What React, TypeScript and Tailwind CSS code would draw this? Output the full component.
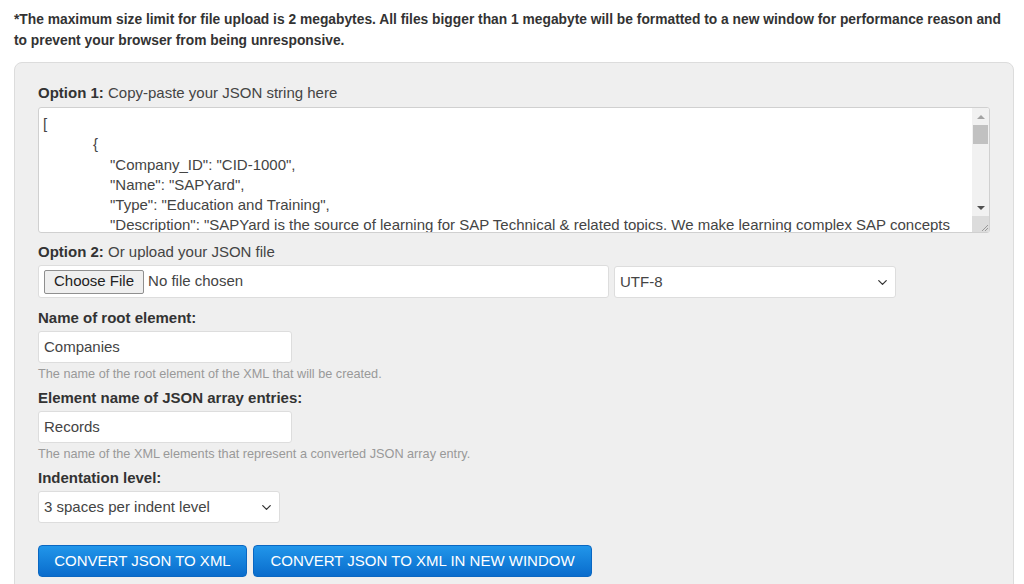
import { ChevronDown } from "lucide-react";

const jsonLines: { indent: number; text: string }[] = [
  { indent: 0, text: "[" },
  { indent: 50, text: "{" },
  { indent: 67, text: '"Company_ID": "CID-1000",' },
  { indent: 67, text: '"Name": "SAPYard",' },
  { indent: 67, text: '"Type": "Education and Training",' },
  {
    indent: 67,
    text: '"Description": "SAPYard is the source of learning for SAP Technical & related topics. We make learning complex SAP concepts',
  },
];

function FieldLabel({ children }: { children: React.ReactNode }) {
  return <div className="text-[15px] leading-[18px] font-bold text-[#333]">{children}</div>;
}

function HelpText({ children }: { children: React.ReactNode }) {
  return <div className="text-[12.7px] leading-[14px] text-[#999] mt-[4px]">{children}</div>;
}

function TextInput({ value }: { value: string }) {
  return (
    <div className="w-[254px] h-[32px] bg-white border border-[#ddd] rounded-[3px] flex items-center px-[5px] text-[15px] text-[#444]">
      {value}
    </div>
  );
}

function FakeSelect({ value, width }: { value: string; width: string }) {
  return (
    <div
      className={`${width} h-[32px] bg-white border border-[#ddd] rounded-[3px] flex items-center justify-between pl-[5px] pr-[5px] text-[15px] text-[#444]`}
    >
      <span>{value}</span>
      <ChevronDown size={15} strokeWidth={2} className="text-[#333]" />
    </div>
  );
}

export default function App() {
  return (
    <div
      className="w-[1024px] h-[584px] overflow-hidden bg-white px-[14px] pt-[9px]"
      style={{ fontFamily: '"Liberation Sans", Arial, sans-serif' }}
    >
      <p className="text-[13.8px] leading-[21px] font-bold text-[#333]">
        *The maximum size limit for file upload is 2 megabytes. All files bigger than 1 megabyte will be formatted to a new window for performance reason and to prevent your browser from being unresponsive.
      </p>

      <div className="mt-[11px] w-[1000px] h-[560px] bg-[#efefef] border border-[#dcdcdc] rounded-[8px] px-[23px] pt-[21px]">
        {/* Option 1 */}
        <div className="text-[15px] leading-[18px] text-[#444]">
          <span className="font-bold text-[#333]">Option 1:</span> Copy-paste your JSON string here
        </div>
        <div className="mt-[5px] w-[952px] h-[126px] bg-white border border-[#d0d0d0] rounded-[3px] flex overflow-hidden">
          <div className="flex-1 overflow-hidden pl-[4px] pt-[6px] text-[15px] leading-[20.3px] text-[#444] whitespace-pre">
            {jsonLines.map((line, i) => (
              <div key={i} style={{ paddingLeft: line.indent }}>
                {line.text}
              </div>
            ))}
          </div>
          <div className="w-[17px] bg-[#f1f1f1] flex flex-col items-center">
            <div className="h-[17px] flex items-center justify-center">
              <div className="w-0 h-0 border-l-[4px] border-r-[4px] border-b-[4px] border-l-transparent border-r-transparent border-b-[#a3a3a3]" />
            </div>
            <div className="w-[15px] h-[19px] bg-[#c1c1c1]" />
            <div className="flex-1" />
            <div className="h-[17px] flex items-center justify-center">
              <div className="w-0 h-0 border-l-[4px] border-r-[4px] border-t-[4px] border-l-transparent border-r-transparent border-t-[#505050]" />
            </div>
            <div className="w-[17px] h-[16px] bg-[#dcdcdc] flex items-end justify-end">
              <svg width="9" height="9" viewBox="0 0 9 9">
                <path d="M8 2 L2 8 M8 5 L5 8" stroke="#999" strokeWidth="1" />
              </svg>
            </div>
          </div>
        </div>

        {/* Option 2 */}
        <div className="mt-[10px] text-[15px] leading-[18px] text-[#444]">
          <span className="font-bold text-[#333]">Option 2:</span> Or upload your JSON file
        </div>
        <div className="mt-[4px] flex gap-[5px]">
          <div className="w-[571px] h-[33px] bg-white border border-[#ddd] rounded-[3px] flex items-center pl-[5px] text-[15px] text-[#444]">
            <div className="h-[24px] px-[9px] bg-[#efefef] border border-[#8f8f8f] rounded-[2px] flex items-center text-[#222]">
              Choose File
            </div>
            <span className="ml-[4px]">No file chosen</span>
          </div>
          <div className="mt-[1px]">
            <FakeSelect value="UTF-8" width="w-[282px]" />
          </div>
        </div>

        <div className="mt-[11px]">
          <FieldLabel>Name of root element:</FieldLabel>
        </div>
        <div className="mt-[4px]">
          <TextInput value="Companies" />
        </div>
        <HelpText>The name of the root element of the XML that will be created.</HelpText>

        <div className="mt-[8px]">
          <FieldLabel>Element name of JSON array entries:</FieldLabel>
        </div>
        <div className="mt-[4px]">
          <TextInput value="Records" />
        </div>
        <HelpText>The name of the XML elements that represent a converted JSON array entry.</HelpText>

        <div className="mt-[8px]">
          <FieldLabel>Indentation level:</FieldLabel>
        </div>
        <div className="mt-[4px]">
          <FakeSelect value="3 spaces per indent level" width="w-[242px]" />
        </div>

        <div className="mt-[22px] flex gap-[6px]">
          <button className="w-[209px] h-[32px] rounded-[4px] bg-gradient-to-b from-[#2196ea] to-[#0a6ccc] border border-[#0a67c2] text-white text-[15px] uppercase">
            Convert JSON to XML
          </button>
          <button className="w-[339px] h-[32px] rounded-[4px] bg-gradient-to-b from-[#2196ea] to-[#0a6ccc] border border-[#0a67c2] text-white text-[15px] uppercase">
            Convert JSON to XML in new window
          </button>
        </div>
      </div>
    </div>
  );
}
